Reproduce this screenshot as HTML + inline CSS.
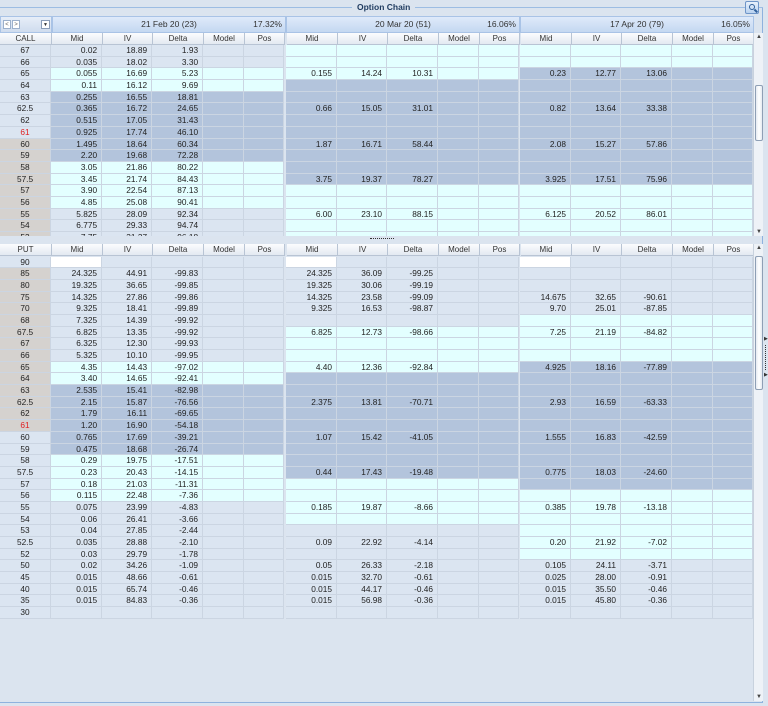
<!DOCTYPE html>
<html><head><meta charset="utf-8"><style>
*{margin:0;padding:0;box-sizing:border-box}
body{width:768px;height:706px;overflow:hidden;background:#dbe4ef;font-family:"Liberation Sans",sans-serif;font-size:8.5px;color:#222;position:relative}
.title{position:absolute;top:0;left:0;width:768px;height:15px}
.title .ln{position:absolute;top:7px;left:0;width:763px;height:1px;background:#9dbde3}
.title span{position:absolute;left:352px;top:2px;background:#dbe4ef;padding:0 5px;font-weight:bold;font-size:8.5px;color:#1e3a5f}
.frame{position:absolute;left:762px;top:8px;width:1px;height:695px;background:#8fb2de}
.fb{position:absolute;left:0;top:702px;width:763px;height:1px;background:#8fb2de}
.gh{position:absolute;top:16px;height:17px;background:linear-gradient(#dfeafa,#c4d8f1);border:1px solid #a9c3e6;text-align:center;line-height:15px;font-size:8.5px;color:#333}
.gh em{position:absolute;right:3px;top:0;font-style:normal}
.hdr{position:absolute;left:0;height:12px;display:flex}
.hdr i{font-style:normal;display:block;height:12px;background:linear-gradient(#fbfcfe,#e3e9f1);border-right:1px solid #b8c4d4;border-bottom:1px solid #b8c4d4;text-align:center;line-height:11px;font-size:8px;color:#333}
.sec{position:absolute;left:0;width:753px;overflow:hidden}
.r{display:flex;height:11.7px}
.r i{font-style:normal;display:block;height:100%;border-right:1px solid #cbd5e2;border-bottom:1px solid #cbd5e2;text-align:right;padding-right:4px;line-height:10.7px;font-size:8.3px;white-space:nowrap}
.r i.s{width:52px;text-align:center;padding:0;background:#dbe5f1}
.r i.s.G{background:#d5d2cf}
.r i.red{color:#e02020}
.r b{display:flex;height:100%;font-weight:normal}
.r b i:nth-child(1){width:51px}
.r b i:nth-child(2){width:50px}
.r b i:nth-child(3){width:51px}
.r b i:nth-child(4){width:41px}
.r b i:nth-child(5){width:40px}
.r u{display:block;width:2px}
.r s{display:block;width:1px}
.L i{background:#dbe5f1}
.C i{background:#e3ffff}
.D i{background:#b3c4dc}
.r b i.w{background:#fff}
.sb{position:absolute;left:753px;width:10px;background:#eef2f7;border-left:1px solid #c8d2de}
.sb .th{position:absolute;left:1px;width:8px;border:1px solid #8e9fb5;border-radius:2px;background:linear-gradient(90deg,#e6ebf2,#fff,#e6ebf2)}
.sb .a{position:absolute;left:2px;font-size:6px;color:#444}
</style></head><body>
<div class="title"><div class="ln"></div><span>Option Chain</span></div>
<div style="position:absolute;left:745px;top:1px;width:14px;height:13px;border:1px solid #6f95c8;border-radius:2px;background:linear-gradient(#e8f1fc,#b9d2f0)"><div style="position:absolute;left:3px;top:2px;width:6px;height:6px;border:1.5px solid #2f5f9a;border-radius:50%"></div><div style="position:absolute;left:8px;top:8px;width:4px;height:1.5px;background:#2f5f9a;transform:rotate(45deg)"></div></div>
<div class="frame"></div><div class="fb"></div>

<!-- corner nav -->
<div style="position:absolute;left:0;top:16px;width:52px;height:17px;background:linear-gradient(#e7eef8,#cfdcee);border:1px solid #a9c3e6">
<div style="position:absolute;left:2px;top:3px;width:8px;height:9px;border:1px solid #9bb0cc;background:#fff;font-size:6px;line-height:8px;text-align:center;color:#666">&lt;</div>
<div style="position:absolute;left:11px;top:3px;width:8px;height:9px;border:1px solid #9bb0cc;background:#fff;font-size:6px;line-height:8px;text-align:center;color:#666">&gt;</div>
<div style="position:absolute;left:40px;top:3px;width:9px;height:9px;border:1px solid #8a9db8;background:#fff;font-size:5px;line-height:8px;text-align:center;color:#333">▼</div>
</div>
<div class="gh" style="left:52px;width:234px">21 Feb 20 (23)<em>17.32%</em></div>
<div class="gh" style="left:286px;width:234px">20 Mar 20 (51)<em>16.06%</em></div>
<div class="gh" style="left:520px;width:234px">17 Apr 20 (79)<em>16.05%</em></div>

<div class="hdr" style="top:33px"><i style="width:52px">CALL</i><i style="width:51px">Mid</i><i style="width:50px">IV</i><i style="width:51px">Delta</i><i style="width:41px">Model</i><i style="width:40px">Pos</i><i style="width:2px;border:0;background:#dbe4ef"></i><i style="width:51px">Mid</i><i style="width:50px">IV</i><i style="width:51px">Delta</i><i style="width:41px">Model</i><i style="width:40px">Pos</i><i style="width:1px;border:0;background:#dbe4ef"></i><i style="width:51px">Mid</i><i style="width:50px">IV</i><i style="width:51px">Delta</i><i style="width:41px">Model</i><i style="width:40px">Pos</i></div>

<div class="sec" style="top:45px;height:191px">
<div class="r"><i class="s">67</i><b class="L"><i>0.02</i><i>18.89</i><i>1.93</i><i></i><i></i></b><u></u><b class="C"><i></i><i></i><i></i><i></i><i></i></b><s></s><b class="C"><i></i><i></i><i></i><i></i><i></i></b></div>
<div class="r"><i class="s">66</i><b class="L"><i>0.035</i><i>18.02</i><i>3.30</i><i></i><i></i></b><u></u><b class="C"><i></i><i></i><i></i><i></i><i></i></b><s></s><b class="C"><i></i><i></i><i></i><i></i><i></i></b></div>
<div class="r"><i class="s">65</i><b class="C"><i>0.055</i><i>16.69</i><i>5.23</i><i></i><i></i></b><u></u><b class="C"><i>0.155</i><i>14.24</i><i>10.31</i><i></i><i></i></b><s></s><b class="D"><i>0.23</i><i>12.77</i><i>13.06</i><i></i><i></i></b></div>
<div class="r"><i class="s">64</i><b class="C"><i>0.11</i><i>16.12</i><i>9.69</i><i></i><i></i></b><u></u><b class="D"><i></i><i></i><i></i><i></i><i></i></b><s></s><b class="D"><i></i><i></i><i></i><i></i><i></i></b></div>
<div class="r"><i class="s">63</i><b class="D"><i>0.255</i><i>16.55</i><i>18.81</i><i></i><i></i></b><u></u><b class="D"><i></i><i></i><i></i><i></i><i></i></b><s></s><b class="D"><i></i><i></i><i></i><i></i><i></i></b></div>
<div class="r"><i class="s">62.5</i><b class="D"><i>0.365</i><i>16.72</i><i>24.65</i><i></i><i></i></b><u></u><b class="D"><i>0.66</i><i>15.05</i><i>31.01</i><i></i><i></i></b><s></s><b class="D"><i>0.82</i><i>13.64</i><i>33.38</i><i></i><i></i></b></div>
<div class="r"><i class="s">62</i><b class="D"><i>0.515</i><i>17.05</i><i>31.43</i><i></i><i></i></b><u></u><b class="D"><i></i><i></i><i></i><i></i><i></i></b><s></s><b class="D"><i></i><i></i><i></i><i></i><i></i></b></div>
<div class="r"><i class="s red">61</i><b class="D"><i>0.925</i><i>17.74</i><i>46.10</i><i></i><i></i></b><u></u><b class="D"><i></i><i></i><i></i><i></i><i></i></b><s></s><b class="D"><i></i><i></i><i></i><i></i><i></i></b></div>
<div class="r"><i class="s G">60</i><b class="D"><i>1.495</i><i>18.64</i><i>60.34</i><i></i><i></i></b><u></u><b class="D"><i>1.87</i><i>16.71</i><i>58.44</i><i></i><i></i></b><s></s><b class="D"><i>2.08</i><i>15.27</i><i>57.86</i><i></i><i></i></b></div>
<div class="r"><i class="s G">59</i><b class="D"><i>2.20</i><i>19.68</i><i>72.28</i><i></i><i></i></b><u></u><b class="D"><i></i><i></i><i></i><i></i><i></i></b><s></s><b class="D"><i></i><i></i><i></i><i></i><i></i></b></div>
<div class="r"><i class="s G">58</i><b class="C"><i>3.05</i><i>21.86</i><i>80.22</i><i></i><i></i></b><u></u><b class="D"><i></i><i></i><i></i><i></i><i></i></b><s></s><b class="D"><i></i><i></i><i></i><i></i><i></i></b></div>
<div class="r"><i class="s G">57.5</i><b class="C"><i>3.45</i><i>21.74</i><i>84.43</i><i></i><i></i></b><u></u><b class="D"><i>3.75</i><i>19.37</i><i>78.27</i><i></i><i></i></b><s></s><b class="D"><i>3.925</i><i>17.51</i><i>75.96</i><i></i><i></i></b></div>
<div class="r"><i class="s G">57</i><b class="C"><i>3.90</i><i>22.54</i><i>87.13</i><i></i><i></i></b><u></u><b class="C"><i></i><i></i><i></i><i></i><i></i></b><s></s><b class="C"><i></i><i></i><i></i><i></i><i></i></b></div>
<div class="r"><i class="s G">56</i><b class="C"><i>4.85</i><i>25.08</i><i>90.41</i><i></i><i></i></b><u></u><b class="C"><i></i><i></i><i></i><i></i><i></i></b><s></s><b class="C"><i></i><i></i><i></i><i></i><i></i></b></div>
<div class="r"><i class="s G">55</i><b class="L"><i>5.825</i><i>28.09</i><i>92.34</i><i></i><i></i></b><u></u><b class="C"><i>6.00</i><i>23.10</i><i>88.15</i><i></i><i></i></b><s></s><b class="C"><i>6.125</i><i>20.52</i><i>86.01</i><i></i><i></i></b></div>
<div class="r"><i class="s G">54</i><b class="L"><i>6.775</i><i>29.33</i><i>94.74</i><i></i><i></i></b><u></u><b class="C"><i></i><i></i><i></i><i></i><i></i></b><s></s><b class="C"><i></i><i></i><i></i><i></i><i></i></b></div>
<div class="r"><i class="s G">53</i><b class="L"><i>7.75</i><i>31.37</i><i>96.18</i><i></i><i></i></b><u></u><b class="C"><i></i><i></i><i></i><i></i><i></i></b><s></s><b class="C"><i></i><i></i><i></i><i></i><i></i></b></div>
</div>
<div class="sb" style="top:33px;height:203px"><span class="a" style="top:1px">▲</span><div class="th" style="top:52px;height:56px"></div><span class="a" style="bottom:1px">▼</span></div>
<div style="position:absolute;left:370px;top:238px;width:24px;height:2px;border-top:1px dotted #333"></div>

<div class="hdr" style="top:244px"><i style="width:52px">PUT</i><i style="width:51px">Mid</i><i style="width:50px">IV</i><i style="width:51px">Delta</i><i style="width:41px">Model</i><i style="width:40px">Pos</i><i style="width:2px;border:0;background:#dbe4ef"></i><i style="width:51px">Mid</i><i style="width:50px">IV</i><i style="width:51px">Delta</i><i style="width:41px">Model</i><i style="width:40px">Pos</i><i style="width:1px;border:0;background:#dbe4ef"></i><i style="width:51px">Mid</i><i style="width:50px">IV</i><i style="width:51px">Delta</i><i style="width:41px">Model</i><i style="width:40px">Pos</i></div>

<div class="sec" style="top:256.5px;height:364px">
<div class="r"><i class="s">90</i><b class="L"><i class="w"></i><i></i><i></i><i></i><i></i></b><u></u><b class="L"><i class="w"></i><i></i><i></i><i></i><i></i></b><s></s><b class="L"><i class="w"></i><i></i><i></i><i></i><i></i></b></div>
<div class="r"><i class="s G">85</i><b class="L"><i>24.325</i><i>44.91</i><i>-99.83</i><i></i><i></i></b><u></u><b class="L"><i>24.325</i><i>36.09</i><i>-99.25</i><i></i><i></i></b><s></s><b class="L"><i></i><i></i><i></i><i></i><i></i></b></div>
<div class="r"><i class="s G">80</i><b class="L"><i>19.325</i><i>36.65</i><i>-99.85</i><i></i><i></i></b><u></u><b class="L"><i>19.325</i><i>30.06</i><i>-99.19</i><i></i><i></i></b><s></s><b class="L"><i></i><i></i><i></i><i></i><i></i></b></div>
<div class="r"><i class="s G">75</i><b class="L"><i>14.325</i><i>27.86</i><i>-99.86</i><i></i><i></i></b><u></u><b class="L"><i>14.325</i><i>23.58</i><i>-99.09</i><i></i><i></i></b><s></s><b class="L"><i>14.675</i><i>32.65</i><i>-90.61</i><i></i><i></i></b></div>
<div class="r"><i class="s G">70</i><b class="L"><i>9.325</i><i>18.41</i><i>-99.89</i><i></i><i></i></b><u></u><b class="L"><i>9.325</i><i>16.53</i><i>-98.87</i><i></i><i></i></b><s></s><b class="L"><i>9.70</i><i>25.01</i><i>-87.85</i><i></i><i></i></b></div>
<div class="r"><i class="s G">68</i><b class="L"><i>7.325</i><i>14.39</i><i>-99.92</i><i></i><i></i></b><u></u><b class="L"><i></i><i></i><i></i><i></i><i></i></b><s></s><b class="C"><i></i><i></i><i></i><i></i><i></i></b></div>
<div class="r"><i class="s G">67.5</i><b class="L"><i>6.825</i><i>13.35</i><i>-99.92</i><i></i><i></i></b><u></u><b class="C"><i>6.825</i><i>12.73</i><i>-98.66</i><i></i><i></i></b><s></s><b class="C"><i>7.25</i><i>21.19</i><i>-84.82</i><i></i><i></i></b></div>
<div class="r"><i class="s G">67</i><b class="L"><i>6.325</i><i>12.30</i><i>-99.93</i><i></i><i></i></b><u></u><b class="C"><i></i><i></i><i></i><i></i><i></i></b><s></s><b class="C"><i></i><i></i><i></i><i></i><i></i></b></div>
<div class="r"><i class="s G">66</i><b class="L"><i>5.325</i><i>10.10</i><i>-99.95</i><i></i><i></i></b><u></u><b class="C"><i></i><i></i><i></i><i></i><i></i></b><s></s><b class="C"><i></i><i></i><i></i><i></i><i></i></b></div>
<div class="r"><i class="s G">65</i><b class="C"><i>4.35</i><i>14.43</i><i>-97.02</i><i></i><i></i></b><u></u><b class="C"><i>4.40</i><i>12.36</i><i>-92.84</i><i></i><i></i></b><s></s><b class="D"><i>4.925</i><i>18.16</i><i>-77.89</i><i></i><i></i></b></div>
<div class="r"><i class="s G">64</i><b class="C"><i>3.40</i><i>14.65</i><i>-92.41</i><i></i><i></i></b><u></u><b class="D"><i></i><i></i><i></i><i></i><i></i></b><s></s><b class="D"><i></i><i></i><i></i><i></i><i></i></b></div>
<div class="r"><i class="s G">63</i><b class="D"><i>2.535</i><i>15.41</i><i>-82.98</i><i></i><i></i></b><u></u><b class="D"><i></i><i></i><i></i><i></i><i></i></b><s></s><b class="D"><i></i><i></i><i></i><i></i><i></i></b></div>
<div class="r"><i class="s G">62.5</i><b class="D"><i>2.15</i><i>15.87</i><i>-76.56</i><i></i><i></i></b><u></u><b class="D"><i>2.375</i><i>13.81</i><i>-70.71</i><i></i><i></i></b><s></s><b class="D"><i>2.93</i><i>16.59</i><i>-63.33</i><i></i><i></i></b></div>
<div class="r"><i class="s G">62</i><b class="D"><i>1.79</i><i>16.11</i><i>-69.65</i><i></i><i></i></b><u></u><b class="D"><i></i><i></i><i></i><i></i><i></i></b><s></s><b class="D"><i></i><i></i><i></i><i></i><i></i></b></div>
<div class="r"><i class="s G red">61</i><b class="D"><i>1.20</i><i>16.90</i><i>-54.18</i><i></i><i></i></b><u></u><b class="D"><i></i><i></i><i></i><i></i><i></i></b><s></s><b class="D"><i></i><i></i><i></i><i></i><i></i></b></div>
<div class="r"><i class="s">60</i><b class="D"><i>0.765</i><i>17.69</i><i>-39.21</i><i></i><i></i></b><u></u><b class="D"><i>1.07</i><i>15.42</i><i>-41.05</i><i></i><i></i></b><s></s><b class="D"><i>1.555</i><i>16.83</i><i>-42.59</i><i></i><i></i></b></div>
<div class="r"><i class="s">59</i><b class="D"><i>0.475</i><i>18.68</i><i>-26.74</i><i></i><i></i></b><u></u><b class="D"><i></i><i></i><i></i><i></i><i></i></b><s></s><b class="D"><i></i><i></i><i></i><i></i><i></i></b></div>
<div class="r"><i class="s">58</i><b class="C"><i>0.29</i><i>19.75</i><i>-17.51</i><i></i><i></i></b><u></u><b class="D"><i></i><i></i><i></i><i></i><i></i></b><s></s><b class="D"><i></i><i></i><i></i><i></i><i></i></b></div>
<div class="r"><i class="s">57.5</i><b class="C"><i>0.23</i><i>20.43</i><i>-14.15</i><i></i><i></i></b><u></u><b class="D"><i>0.44</i><i>17.43</i><i>-19.48</i><i></i><i></i></b><s></s><b class="D"><i>0.775</i><i>18.03</i><i>-24.60</i><i></i><i></i></b></div>
<div class="r"><i class="s">57</i><b class="C"><i>0.18</i><i>21.03</i><i>-11.31</i><i></i><i></i></b><u></u><b class="C"><i></i><i></i><i></i><i></i><i></i></b><s></s><b class="D"><i></i><i></i><i></i><i></i><i></i></b></div>
<div class="r"><i class="s">56</i><b class="C"><i>0.115</i><i>22.48</i><i>-7.36</i><i></i><i></i></b><u></u><b class="C"><i></i><i></i><i></i><i></i><i></i></b><s></s><b class="C"><i></i><i></i><i></i><i></i><i></i></b></div>
<div class="r"><i class="s">55</i><b class="L"><i>0.075</i><i>23.99</i><i>-4.83</i><i></i><i></i></b><u></u><b class="C"><i>0.185</i><i>19.87</i><i>-8.66</i><i></i><i></i></b><s></s><b class="C"><i>0.385</i><i>19.78</i><i>-13.18</i><i></i><i></i></b></div>
<div class="r"><i class="s">54</i><b class="L"><i>0.06</i><i>26.41</i><i>-3.66</i><i></i><i></i></b><u></u><b class="C"><i></i><i></i><i></i><i></i><i></i></b><s></s><b class="C"><i></i><i></i><i></i><i></i><i></i></b></div>
<div class="r"><i class="s">53</i><b class="L"><i>0.04</i><i>27.85</i><i>-2.44</i><i></i><i></i></b><u></u><b class="L"><i></i><i></i><i></i><i></i><i></i></b><s></s><b class="C"><i></i><i></i><i></i><i></i><i></i></b></div>
<div class="r"><i class="s">52.5</i><b class="L"><i>0.035</i><i>28.88</i><i>-2.10</i><i></i><i></i></b><u></u><b class="L"><i>0.09</i><i>22.92</i><i>-4.14</i><i></i><i></i></b><s></s><b class="C"><i>0.20</i><i>21.92</i><i>-7.02</i><i></i><i></i></b></div>
<div class="r"><i class="s">52</i><b class="L"><i>0.03</i><i>29.79</i><i>-1.78</i><i></i><i></i></b><u></u><b class="L"><i></i><i></i><i></i><i></i><i></i></b><s></s><b class="C"><i></i><i></i><i></i><i></i><i></i></b></div>
<div class="r"><i class="s">50</i><b class="L"><i>0.02</i><i>34.26</i><i>-1.09</i><i></i><i></i></b><u></u><b class="L"><i>0.05</i><i>26.33</i><i>-2.18</i><i></i><i></i></b><s></s><b class="L"><i>0.105</i><i>24.11</i><i>-3.71</i><i></i><i></i></b></div>
<div class="r"><i class="s">45</i><b class="L"><i>0.015</i><i>48.66</i><i>-0.61</i><i></i><i></i></b><u></u><b class="L"><i>0.015</i><i>32.70</i><i>-0.61</i><i></i><i></i></b><s></s><b class="L"><i>0.025</i><i>28.00</i><i>-0.91</i><i></i><i></i></b></div>
<div class="r"><i class="s">40</i><b class="L"><i>0.015</i><i>65.74</i><i>-0.46</i><i></i><i></i></b><u></u><b class="L"><i>0.015</i><i>44.17</i><i>-0.46</i><i></i><i></i></b><s></s><b class="L"><i>0.015</i><i>35.50</i><i>-0.46</i><i></i><i></i></b></div>
<div class="r"><i class="s">35</i><b class="L"><i>0.015</i><i>84.83</i><i>-0.36</i><i></i><i></i></b><u></u><b class="L"><i>0.015</i><i>56.98</i><i>-0.36</i><i></i><i></i></b><s></s><b class="L"><i>0.015</i><i>45.80</i><i>-0.36</i><i></i><i></i></b></div>
<div class="r"><i class="s">30</i><b class="L"><i></i><i></i><i></i><i></i><i></i></b><u></u><b class="L"><i></i><i></i><i></i><i></i><i></i></b><s></s><b class="L"><i></i><i></i><i></i><i></i><i></i></b></div>
</div>
<div class="sb" style="top:244px;height:457px"><span class="a" style="top:1px">▲</span><div class="th" style="top:12px;height:134px"></div><span class="a" style="bottom:1px">▼</span></div>
<div style="position:absolute;left:764px;top:336px;font-size:5px;color:#333">▶</div>
<div style="position:absolute;left:765px;top:345px;width:1px;height:25px;border-left:1px dotted #333"></div>
<div style="position:absolute;left:764px;top:372px;font-size:5px;color:#333">▶</div>
</body></html>
